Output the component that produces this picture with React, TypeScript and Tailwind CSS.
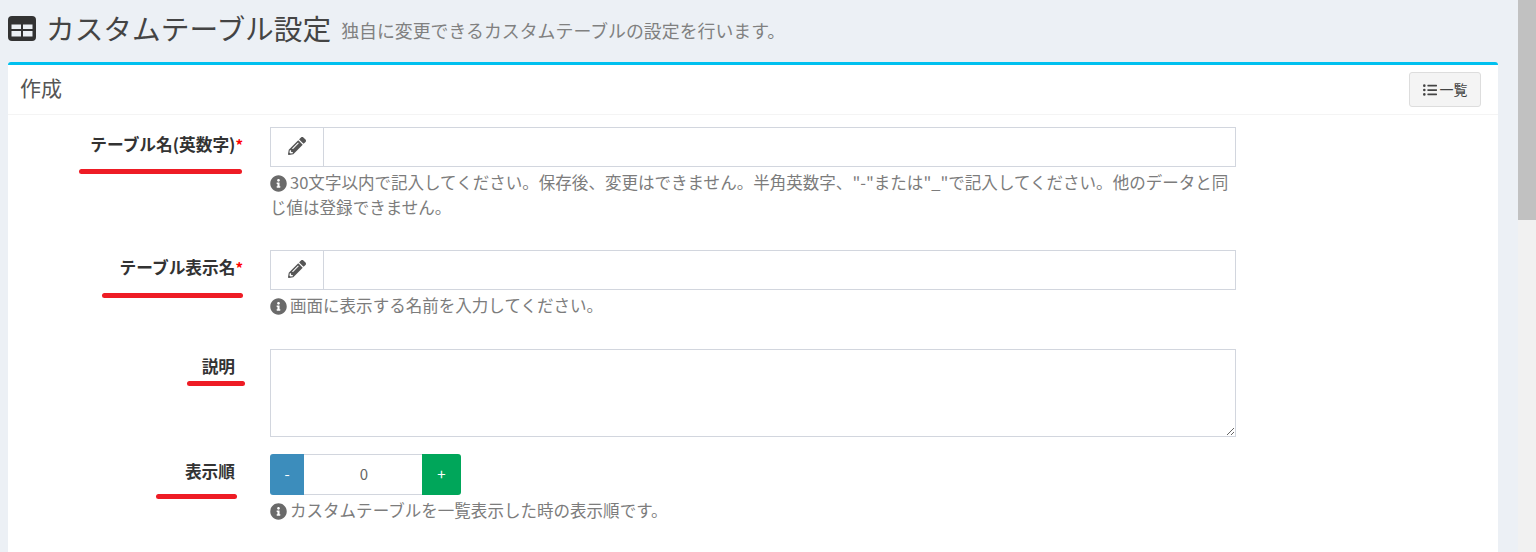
import React from 'react';
import { FaInfoCircle, FaListUl, FaPencilAlt } from 'react-icons/fa';

const font = { fontFamily: '"Noto Sans CJK JP", "Open Sans", sans-serif' };

const Help: React.FC<{ text: string }> = ({ text }) => (
  <p className="mt-[3px] text-[16.55px] leading-[25px] text-[#7c7c7c]">
    <FaInfoCircle className="mr-[3px] inline-block h-[17px] w-[17px] -translate-y-[1px] text-[#6a6a6a]" />
    {text}
  </p>
);

const Row: React.FC<{
  label: string;
  required?: boolean;
  markWidth: number;
  markRight: number;
  markTop: number;
  className: string;
  children: React.ReactNode;
}> = ({ label, required, markWidth, markRight, markTop, className, children }) => (
  <div className={`flex ${className}`}>
    <div
      className={`relative w-[235px] shrink-0 pt-[5px] text-right text-[16.7px] leading-[24px] font-bold text-[#333] ${
        required ? '' : 'pr-2'
      }`}
    >
      {label}
      {required && <span className="text-[15px] text-[#f00]">*</span>}
      <span
        className="absolute h-[5px] rounded-full bg-[#ee1c25]"
        style={{ width: markWidth, right: markRight, top: markTop }}
      />
    </div>
    <div className="ml-[27px] w-[966px]">{children}</div>
  </div>
);

const PencilInput = () => (
  <div className="flex h-[40px] border border-[#d2d6de] bg-white">
    <span className="flex w-[53px] items-center justify-center border-r border-[#d2d6de]">
      <FaPencilAlt className="h-[18px] w-[18px] -translate-y-[1px] text-[#555]" />
    </span>
    <input className="min-w-0 flex-1 outline-none" />
  </div>
);

export default function App() {
  return (
    <div className="flex h-[552px] overflow-hidden bg-[#ecf0f5]" style={font}>
      <main className="w-[1518px] shrink-0 pl-2 pr-5">
        <header className="flex h-[62px] items-center pb-[6px]">
          <svg className="h-[25px] w-[28px]" viewBox="0 0 28 25">
            <rect width="28" height="25" rx="4" fill="#333" />
            <rect x="3.5" y="8.5" width="9.5" height="4.5" fill="#ecf0f5" />
            <rect x="15" y="8.5" width="9.5" height="4.5" fill="#ecf0f5" />
            <rect x="3.5" y="15" width="9.5" height="5.5" fill="#ecf0f5" />
            <rect x="15" y="15" width="9.5" height="5.5" fill="#ecf0f5" />
          </svg>
          <h1 className="ml-[10px] text-[28.7px] leading-none text-[#444]">カスタムテーブル設定</h1>
          <span className="ml-[10px] mt-[6px] text-[17.9px] leading-none text-[#808080]">
            独自に変更できるカスタムテーブルの設定を行います。
          </span>
        </header>

        <section className="h-[490px] rounded-t-[3px] border-t-[3px] border-[#00c0ef] bg-white">
          <div className="flex h-[50px] items-center justify-between border-b border-[#f4f4f4] pl-3 pr-[17px]">
            <h2 className="-translate-y-[2px] text-[21px] leading-none text-[#555]">作成</h2>
            <button className="flex h-[35px] w-[72px] items-center justify-center gap-[3px] rounded-[3px] border border-[#ddd] bg-[#f4f4f4] text-[14px] text-[#444]">
              <FaListUl className="h-[14px] w-[14px]" />
              一覧
            </button>
          </div>

          <Row label="テーブル名(英数字)" required markWidth={163} markRight={1} markTop={42} className="mt-[12px]">
            <PencilInput />
            <Help text={'30文字以内で記入してください。保存後、変更はできません。半角英数字、"-"または"_"で記入してください。他のデータと同じ値は登録できません。'} />
          </Row>

          <Row label="テーブル表示名" required markWidth={141} markRight={0} markTop={43} className="mt-[30px]">
            <PencilInput />
            <Help text="画面に表示する名前を入力してください。" />
          </Row>

          <Row label="説明" markWidth={58} markRight={-2} markTop={32} className="mt-[31px]">
            <textarea className="block h-[88px] w-full border border-[#d2d6de] outline-none" />
          </Row>

          <Row label="表示順" markWidth={81} markRight={6} markTop={40} className="mt-[17px]">
            <div className="flex h-[41px] w-[191px] text-[15px]">
              <button className="w-[34px] rounded-l-[3px] bg-[#3c8dbc] text-white">-</button>
              <input
                readOnly
                value="0"
                className="w-[118px] min-w-0 border-y border-[#d2d6de] pl-[2px] text-center text-[#666] outline-none"
              />
              <button className="w-[39px] rounded-r-[3px] bg-[#00a65a] text-white">+</button>
            </div>
            <Help text="カスタムテーブルを一覧表示した時の表示順です。" />
          </Row>
        </section>
      </main>

      <aside className="w-[18px] shrink-0 bg-[#f1f1f1]">
        <div className="h-[220px] bg-[#c1c1c1]" />
      </aside>
    </div>
  );
}
